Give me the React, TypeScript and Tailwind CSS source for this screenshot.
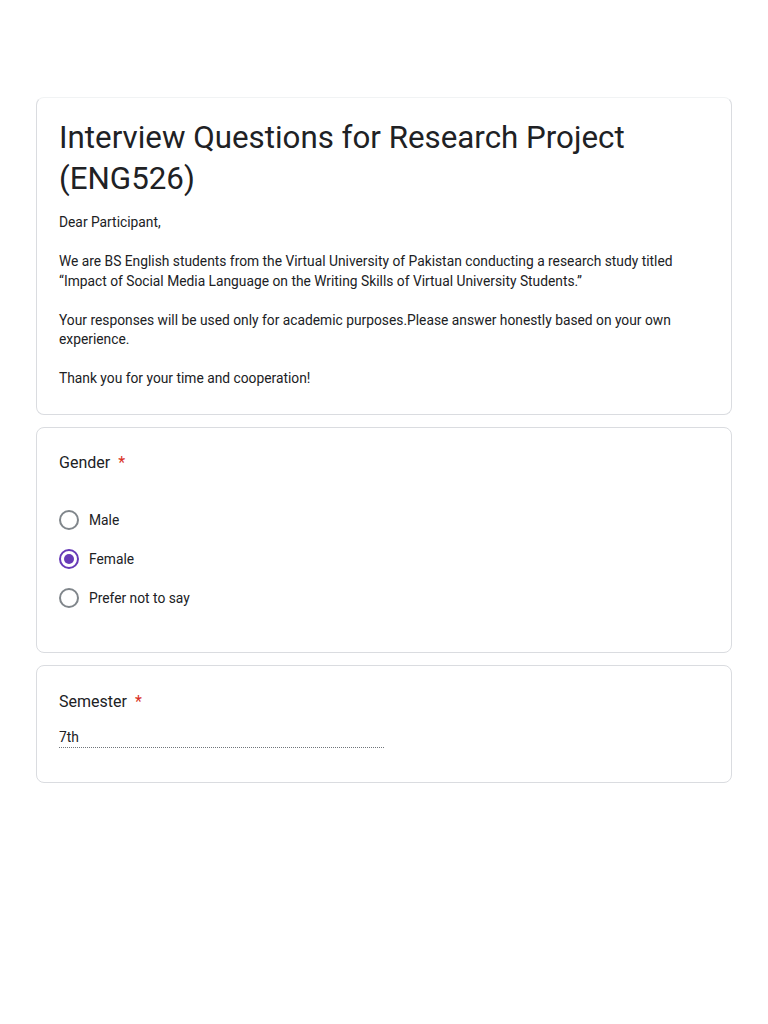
import React from "react";

function Radio({ checked, label }: { checked?: boolean; label: string }) {
  return (
    <div className="flex items-center h-[39px]">
      <div
        className={
          "w-[20px] h-[20px] rounded-full border-2 flex items-center justify-center " +
          (checked ? "border-[#673ab7]" : "border-[#80868b]")
        }
      >
        {checked && <div className="w-[10px] h-[10px] rounded-full bg-[#673ab7]" />}
      </div>
      <span className="ml-[10px] text-[13.8px] text-[#202124]">{label}</span>
    </div>
  );
}

export default function App() {
  return (
    <div
      className="min-h-[1024px] bg-white pt-[97px] px-[36px]"
      style={{ fontFamily: "Roboto, 'Liberation Sans', sans-serif" }}
    >
      <div className="flex flex-col gap-[12px] w-[696px]">
        <div className="border border-[#dadce0] border-t-[#f1f3f4] rounded-[8px] px-[22px] pt-[19px] pb-[25px]">
          <h1 className="text-[31.3px] leading-[41px] text-[#202124]">
            Interview Questions for Research Project (ENG526)
          </h1>
          <div className="mt-[14px] text-[13.8px] leading-[19.5px] text-[#202124] whitespace-pre-line">
            {"Dear Participant,\n\nWe are BS English students from the Virtual University of Pakistan conducting a research study titled “Impact of Social Media Language on the Writing Skills of Virtual University Students.”\n\nYour responses will be used only for academic purposes.Please answer honestly based on your own experience.\n\nThank you for your time and cooperation!"}
          </div>
        </div>

        <div className="border border-[#dadce0] rounded-[8px] px-[22px] pt-[23px] pb-[34px]">
          <div className="text-[16px] leading-[24px] text-[#202124]">
            Gender <span className="text-[#d93025] ml-[4px]">*</span>
          </div>
          <div className="mt-[26px] flex flex-col">
            <Radio label="Male" />
            <Radio label="Female" checked />
            <Radio label="Prefer not to say" />
          </div>
        </div>

        <div className="border border-[#dadce0] rounded-[8px] px-[22px] pt-[24px] pb-[34px]">
          <div className="text-[16px] leading-[24px] text-[#202124]">
            Semester <span className="text-[#d93025] ml-[4px]">*</span>
          </div>
          <div className="mt-[13px] w-[325px] border-b border-dotted border-[#70757a] text-[13.8px] leading-[20px] text-[#202124]">
            7th
          </div>
        </div>
      </div>
    </div>
  );
}
